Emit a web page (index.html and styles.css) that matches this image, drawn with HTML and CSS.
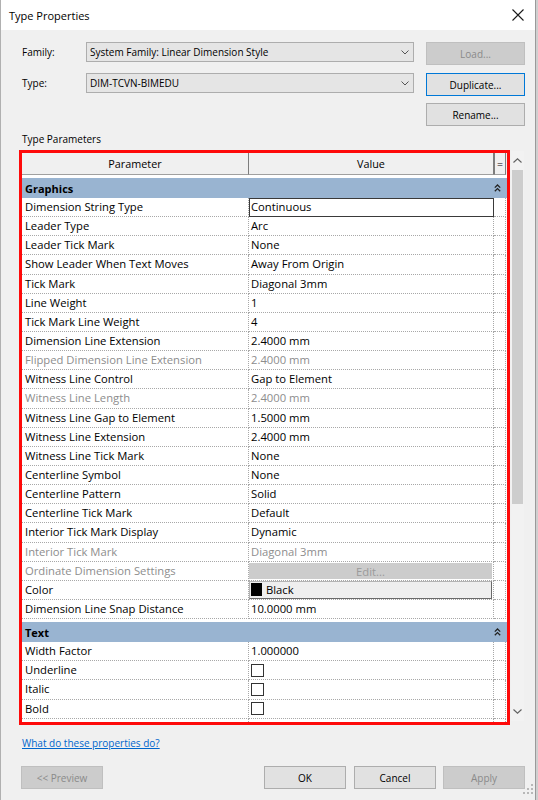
FILE: index.html
```html
<!DOCTYPE html>
<html>
<head>
<meta charset="utf-8">
<link rel="stylesheet" href="styles.css">
</head>
<body>
<div class="window">
  <div class="titlebar">
    <span class="title">Type Properties</span>
    <svg class="close" width="12" height="12" viewBox="0 0 12 12"><path d="M0.5 0.5 L11.5 11.5 M11.5 0.5 L0.5 11.5" stroke="#1a1a1a" stroke-width="1.1" fill="none"/></svg>
  </div>
  <div class="body">
    <div class="field-row first">
      <label class="field-label">Family:</label>
      <div class="combo"><span>System Family: Linear Dimension Style</span><svg width="8" height="5" viewBox="0 0 8 5"><polyline points="0.5,0.5 4,4 7.5,0.5" stroke="#555" stroke-width="1" fill="none"/></svg></div>
      <div class="btn disabled side">Load...</div>
    </div>
    <div class="field-row second">
      <label class="field-label">Type:</label>
      <div class="combo"><span>DIM-TCVN-BIMEDU</span><svg width="8" height="5" viewBox="0 0 8 5"><polyline points="0.5,0.5 4,4 7.5,0.5" stroke="#555" stroke-width="1" fill="none"/></svg></div>
      <div class="btn focus side">Duplicate...</div>
    </div>
    <div class="rename-row">
      <div class="btn side">Rename...</div>
    </div>
    <div class="section-label">Type Parameters</div>
    <div class="grid-area">
      <div class="grid">
        <div class="hdr">
          <div class="hc">Parameter</div>
          <div class="hc">Value</div>
          <div class="hc eq">=</div>
        </div>
        <div class="group"><span>Graphics</span><svg width="7" height="8" viewBox="0 0 7 8"><polyline points="0.8,3.6 3.5,1 6.2,3.6" stroke="#222" stroke-width="1.3" fill="none"/><polyline points="0.8,7.2 3.5,4.6 6.2,7.2" stroke="#222" stroke-width="1.3" fill="none"/></svg></div>
        <div class="row"><div class="p">Dimension String Type</div><div class="v editing">Continuous</div><div class="e"></div></div>
        <div class="row"><div class="p">Leader Type</div><div class="v">Arc</div><div class="e"></div></div>
        <div class="row"><div class="p">Leader Tick Mark</div><div class="v">None</div><div class="e"></div></div>
        <div class="row"><div class="p">Show Leader When Text Moves</div><div class="v">Away From Origin</div><div class="e"></div></div>
        <div class="row"><div class="p">Tick Mark</div><div class="v">Diagonal 3mm</div><div class="e"></div></div>
        <div class="row"><div class="p">Line Weight</div><div class="v">1</div><div class="e"></div></div>
        <div class="row"><div class="p">Tick Mark Line Weight</div><div class="v">4</div><div class="e"></div></div>
        <div class="row"><div class="p">Dimension Line Extension</div><div class="v">2.4000 mm</div><div class="e"></div></div>
        <div class="row dis"><div class="p">Flipped Dimension Line Extension</div><div class="v">2.4000 mm</div><div class="e"></div></div>
        <div class="row"><div class="p">Witness Line Control</div><div class="v">Gap to Element</div><div class="e"></div></div>
        <div class="row dis"><div class="p">Witness Line Length</div><div class="v">2.4000 mm</div><div class="e"></div></div>
        <div class="row"><div class="p">Witness Line Gap to Element</div><div class="v">1.5000 mm</div><div class="e"></div></div>
        <div class="row"><div class="p">Witness Line Extension</div><div class="v">2.4000 mm</div><div class="e"></div></div>
        <div class="row"><div class="p">Witness Line Tick Mark</div><div class="v">None</div><div class="e"></div></div>
        <div class="row"><div class="p">Centerline Symbol</div><div class="v">None</div><div class="e"></div></div>
        <div class="row"><div class="p">Centerline Pattern</div><div class="v">Solid</div><div class="e"></div></div>
        <div class="row"><div class="p">Centerline Tick Mark</div><div class="v">Default</div><div class="e"></div></div>
        <div class="row"><div class="p">Interior Tick Mark Display</div><div class="v">Dynamic</div><div class="e"></div></div>
        <div class="row dis"><div class="p">Interior Tick Mark</div><div class="v">Diagonal 3mm</div><div class="e"></div></div>
        <div class="row dis"><div class="p">Ordinate Dimension Settings</div><div class="v btncell"><div class="editbtn">Edit...</div></div><div class="e"></div></div>
        <div class="row"><div class="p">Color</div><div class="v colorcell"><div class="colorbtn"><span class="swatch"></span><span>Black</span></div></div><div class="e"></div></div>
        <div class="row"><div class="p">Dimension Line Snap Distance</div><div class="v">10.0000 mm</div><div class="e"></div></div>
        <div class="group"><span>Text</span><svg width="7" height="8" viewBox="0 0 7 8"><polyline points="0.8,3.6 3.5,1 6.2,3.6" stroke="#222" stroke-width="1.3" fill="none"/><polyline points="0.8,7.2 3.5,4.6 6.2,7.2" stroke="#222" stroke-width="1.3" fill="none"/></svg></div>
        <div class="row"><div class="p">Width Factor</div><div class="v">1.000000</div><div class="e"></div></div>
        <div class="row"><div class="p">Underline</div><div class="v chk"><span class="box"></span></div><div class="e"></div></div>
        <div class="row"><div class="p">Italic</div><div class="v chk"><span class="box"></span></div><div class="e"></div></div>
        <div class="row"><div class="p">Bold</div><div class="v chk"><span class="box"></span></div><div class="e"></div></div>
        <div class="row"><div class="p"></div><div class="v"></div><div class="e"></div></div>
      </div>
      <div class="scroll">
        <div class="arrow"><svg width="9" height="5" viewBox="0 0 9 5"><polyline points="0.5,4.5 4.5,0.8 8.5,4.5" stroke="#606060" stroke-width="1.1" fill="none"/></svg></div>
        <div class="thumb"></div>
        <div class="track"></div>
        <div class="arrow"><svg width="9" height="5" viewBox="0 0 9 5"><polyline points="0.5,0.5 4.5,4.2 8.5,0.5" stroke="#606060" stroke-width="1.1" fill="none"/></svg></div>
      </div>
    </div>
    <a class="help">What do these properties do?</a>
    <div class="footer">
      <div class="btn disabled preview">&lt;&lt; Preview</div>
      <div class="btn ok">OK</div>
      <div class="btn cancel">Cancel</div>
      <div class="btn disabled apply">Apply</div>
    </div>
  </div>
  <svg class="grip" width="10" height="10" viewBox="0 0 10 10">
    <rect x="8" y="0" width="2" height="2" fill="#b8b8b8"/>
    <rect x="4" y="4" width="2" height="2" fill="#b8b8b8"/>
    <rect x="8" y="4" width="2" height="2" fill="#b8b8b8"/>
    <rect x="0" y="8" width="2" height="2" fill="#b8b8b8"/>
    <rect x="4" y="8" width="2" height="2" fill="#b8b8b8"/>
    <rect x="8" y="8" width="2" height="2" fill="#b8b8b8"/>
  </svg>
</div>
</body>
</html>
```

FILE: styles.css
```css
* { box-sizing: border-box; }
html, body { margin: 0; padding: 0; }
body {
  background: #cfcfcf;
  font-family: "Open Sans", "Noto Sans", sans-serif;
  font-size: 10px;
  color: #000;
  width: 538px;
  height: 800px;
  overflow: hidden;
}
.window {
  width: 536px;
  height: 800px;
  border-left: 1px solid #b0b0b0;
  border-right: 1px solid #9a9a9a;
  background: #f0f0f0;
  display: flex;
  flex-direction: column;
  position: relative;
}
.titlebar {
  height: 30px;
  background: #fff;
  display: flex;
  align-items: center;
  justify-content: space-between;
  padding: 0 11px 0 8px;
}
.title { font-size: 11px; }
.body {
  padding: 12px 10px 0 18px;
  display: flex;
  flex-direction: column;
}
.field-row {
  display: flex;
  align-items: flex-start;
  height: 23px;
}
.field-row.first { margin-bottom: 8px; }
.field-row.second { margin-bottom: 7px; }
.field-label {
  width: 67px;
  padding-left: 3px;
  line-height: 20px;
}
.combo {
  width: 328px;
  height: 20px;
  background: #e5e5e5;
  border: 1px solid #adadad;
  display: flex;
  align-items: center;
  justify-content: space-between;
  padding: 0 4px 0 3px;
}
.btn {
  height: 23px;
  width: 82px;
  background: #e1e1e1;
  border: 1px solid #adadad;
  display: flex;
  align-items: center;
  justify-content: center;
}
.btn.side { width: 99px; margin-left: 12px; }
.btn.disabled { background: #cccccc; border-color: #bfbfbf; color: #8a8a8a; }
.btn.focus { border-color: #0078d7; }
.rename-row { display: flex; justify-content: flex-end; }
.section-label {
  margin-top: 5px;
  padding-left: 3px;
  line-height: 16px;
}
.grid-area {
  display: flex;
  margin-top: 3px;
  align-items: flex-start;
}
.grid {
  width: 491px;
  height: 575px;
  border: 3px solid #fe0a0a;
  background: #fff;
  overflow: hidden;
  font-size: 11.25px;
}
.hdr {
  display: grid;
  grid-template-columns: 227px 245px 12px;
  height: 22px;
  background: #f0f0f0;
}
.hc {
  border-right: 1px solid #7d7d7d;
  border-bottom: 1px solid #a0a0a0;
  display: flex;
  align-items: center;
  justify-content: center;
  font-size: 10.8px;
}
.hc.eq { border-left: 1px solid #7d7d7d; font-size: 10.5px; }
.group {
  margin-top: 3px;
  height: 20px;
  background: #99b4d1;
  font-weight: bold;
  font-size: 11px;
  display: flex;
  align-items: center;
  justify-content: space-between;
  padding: 0 6px 0 3px;
}
.row {
  display: grid;
  grid-template-columns: 227px 245px 12px;
  height: 19.15px;
}
.row > div {
  border-right: 1px dotted #a8a8a8;
  border-bottom: 1px dotted #a8a8a8;
  white-space: nowrap;
  overflow: hidden;
  line-height: 18px;
}
.row .p { padding-left: 3px; }
.row .v { padding-left: 2px; }
.row.dis { color: #8d8d8d; }
.row .v.editing {
  border: 1px solid #3a3a3a;
  padding-left: 1px;
  line-height: 16px;
}
.row .v.btncell { padding: 1px 1px 1px 0; }
.editbtn {
  height: 100%;
  background: #cccccc;
  color: #9a9a9a;
  text-align: center;
  line-height: 17px;
}
.row .v.colorcell { padding: 0 1px 0 0; }
.colorbtn {
  height: 100%;
  background: #efefef;
  border: 1px solid #b4b4b4;
  border-right-color: #6a6a6a;
  border-bottom-color: #6a6a6a;
  display: flex;
  align-items: center;
  padding-left: 1px;
  line-height: 16px;
}
.swatch {
  width: 11px;
  height: 13px;
  background: #000;
  margin-right: 4px;
}
.row .v.chk { display: flex; align-items: center; }
.box {
  width: 13px;
  height: 13px;
  border: 1px solid #333;
  background: #fff;
}
.scroll {
  width: 13px;
  height: 570px;
  margin-top: 1px;
  margin-left: 1px;
  display: flex;
  flex-direction: column;
  background: #f2f2f2;
}
.arrow {
  height: 19px;
  display: flex;
  align-items: center;
  justify-content: center;
}
.thumb {
  height: 334px;
  margin: 0 1px;
  background: #cdcdcd;
}
.track { flex: 1; }
.help {
  margin-top: 10px;
  margin-left: 3px;
  line-height: 16px;
  color: #0066cc;
  text-decoration: underline;
  align-self: flex-start;
}
.footer {
  margin-top: 15px;
  display: flex;
}
.btn.preview { margin-left: 2px; }
.btn.ok { margin-left: auto; }
.btn.cancel { margin-left: 8px; }
.btn.apply { margin-left: 7px; }
.grip { position: absolute; right: 2px; bottom: 6px; }
```
